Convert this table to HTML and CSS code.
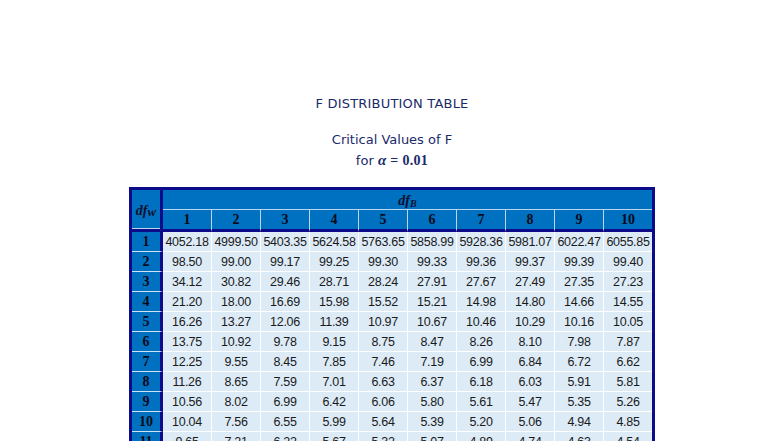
FILE: index.html
```html
<!DOCTYPE html>
<html>
<head>
<meta charset="utf-8">
<title>F Distribution Table</title>
<link rel="stylesheet" href="styles.css">
</head>
<body>
<div class="page">
  <h1 class="title">F DISTRIBUTION TABLE</h1>
  <div class="subtitle">
    <div class="sub-line">Critical Values of F</div>
    <div class="sub-line">for <span class="math-i">α</span> <span class="math">= 0.01</span></div>
  </div>
  <table class="ftable">
    <thead>
      <tr>
        <th class="corner" rowspan="2"><span class="mi">df</span><span class="mi sub-w">w</span></th>
        <th class="dfb" colspan="10"><span class="mi">df</span><span class="mi sub-b">B</span></th>
      </tr>
      <tr>
        <th class="col first">1</th><th class="col">2</th><th class="col">3</th><th class="col">4</th><th class="col">5</th><th class="col">6</th><th class="col">7</th><th class="col">8</th><th class="col">9</th><th class="col">10</th>
      </tr>
    </thead>
    <tbody>
      <tr class="r1"><th class="rowh">1</th><td class="first">4052.18</td><td>4999.50</td><td>5403.35</td><td>5624.58</td><td>5763.65</td><td>5858.99</td><td>5928.36</td><td>5981.07</td><td>6022.47</td><td>6055.85</td></tr>
      <tr><th class="rowh">2</th><td class="first">98.50</td><td>99.00</td><td>99.17</td><td>99.25</td><td>99.30</td><td>99.33</td><td>99.36</td><td>99.37</td><td>99.39</td><td>99.40</td></tr>
      <tr><th class="rowh">3</th><td class="first">34.12</td><td>30.82</td><td>29.46</td><td>28.71</td><td>28.24</td><td>27.91</td><td>27.67</td><td>27.49</td><td>27.35</td><td>27.23</td></tr>
      <tr><th class="rowh">4</th><td class="first">21.20</td><td>18.00</td><td>16.69</td><td>15.98</td><td>15.52</td><td>15.21</td><td>14.98</td><td>14.80</td><td>14.66</td><td>14.55</td></tr>
      <tr><th class="rowh">5</th><td class="first">16.26</td><td>13.27</td><td>12.06</td><td>11.39</td><td>10.97</td><td>10.67</td><td>10.46</td><td>10.29</td><td>10.16</td><td>10.05</td></tr>
      <tr><th class="rowh">6</th><td class="first">13.75</td><td>10.92</td><td>9.78</td><td>9.15</td><td>8.75</td><td>8.47</td><td>8.26</td><td>8.10</td><td>7.98</td><td>7.87</td></tr>
      <tr><th class="rowh">7</th><td class="first">12.25</td><td>9.55</td><td>8.45</td><td>7.85</td><td>7.46</td><td>7.19</td><td>6.99</td><td>6.84</td><td>6.72</td><td>6.62</td></tr>
      <tr><th class="rowh">8</th><td class="first">11.26</td><td>8.65</td><td>7.59</td><td>7.01</td><td>6.63</td><td>6.37</td><td>6.18</td><td>6.03</td><td>5.91</td><td>5.81</td></tr>
      <tr><th class="rowh">9</th><td class="first">10.56</td><td>8.02</td><td>6.99</td><td>6.42</td><td>6.06</td><td>5.80</td><td>5.61</td><td>5.47</td><td>5.35</td><td>5.26</td></tr>
      <tr><th class="rowh">10</th><td class="first">10.04</td><td>7.56</td><td>6.55</td><td>5.99</td><td>5.64</td><td>5.39</td><td>5.20</td><td>5.06</td><td>4.94</td><td>4.85</td></tr>
      <tr><th class="rowh">11</th><td class="first">9.65</td><td>7.21</td><td>6.22</td><td>5.67</td><td>5.32</td><td>5.07</td><td>4.89</td><td>4.74</td><td>4.63</td><td>4.54</td></tr>
    </tbody>
  </table>
</div>
</body>
</html>
```

FILE: styles.css
```css
html, body {
  margin: 0;
  padding: 0;
  background: #ffffff;
  overflow: hidden;
}

.page {
  width: 784px;
  height: 441px;
  overflow: hidden;
  display: flex;
  flex-direction: column;
  align-items: center;
}

.title {
  margin: 96px 0 0 0;
  font-family: "DejaVu Sans", sans-serif;
  font-weight: normal;
  font-size: 13px;
  line-height: 16px;
  letter-spacing: 0.2px;
  color: #1b2a6b;
}

.subtitle {
  margin-top: 18px;
  text-align: center;
  font-family: "DejaVu Sans", sans-serif;
  font-size: 13px;
  color: #1b2a6b;
}

.sub-line {
  line-height: 20px;
}

.math-i {
  font-family: "Liberation Serif", serif;
  font-style: italic;
  font-weight: bold;
  font-size: 15px;
}

.math {
  font-family: "Liberation Serif", serif;
  font-weight: bold;
  font-size: 14px;
  letter-spacing: 0.3px;
}

.ftable {
  margin-top: 16px;
  border: 3px solid #0c0c8a;
  border-collapse: separate;
  border-spacing: 0;
  background: #0070c0;
}

.ftable th,
.ftable td {
  padding: 0;
  text-align: center;
  vertical-align: middle;
}

.corner {
  width: 28px;
  background: #0070c0;
  border-right: 3px solid #0c0c8a;
  border-bottom: 3px solid #0c0c8a;
  box-shadow: inset 0 -1px 0 #bcd6ee;
  color: #0a0a2a;
}

.mi {
  font-family: "Liberation Serif", serif;
  font-style: italic;
  font-weight: bold;
  font-size: 14px;
  color: #101030;
}

.sub-w {
  font-size: 13px;
  position: relative;
  top: 1px;
}

.sub-b {
  font-size: 10px;
  position: relative;
  top: 2px;
}

.dfb {
  height: 19px;
  background: #0070c0;
  border-bottom: 1px solid #bcd6ee;
}

.col {
  width: 48px;
  height: 19px;
  background: #0070c0;
  border-left: 1px solid #bcd6ee;
  border-bottom: 3px solid #0c0c8a;
  font-family: "Liberation Serif", serif;
  font-weight: bold;
  font-size: 14px;
  color: #0a0a1a;
}

.col.first {
  width: 48px;
  border-left: none;
}

.rowh {
  height: 19px;
  background: #0070c0;
  border-right: 3px solid #0c0c8a;
  border-top: 1px solid #cfe2f3;
  font-family: "Liberation Serif", serif;
  font-weight: bold;
  font-size: 14px;
  color: #0a0a1a;
}

.ftable td {
  height: 19px;
  background: #ddebf7;
  border-top: 1px solid #ffffff;
  border-left: 1px solid #ffffff;
  font-family: "Liberation Sans", sans-serif;
  font-size: 12.5px;
  letter-spacing: -0.3px;
  color: #1a1a1a;
  white-space: nowrap;
}

.ftable td.first {
  border-left: none;
}

.ftable tr.r1 th,
.ftable tr.r1 td {
  border-top: none;
}
```
